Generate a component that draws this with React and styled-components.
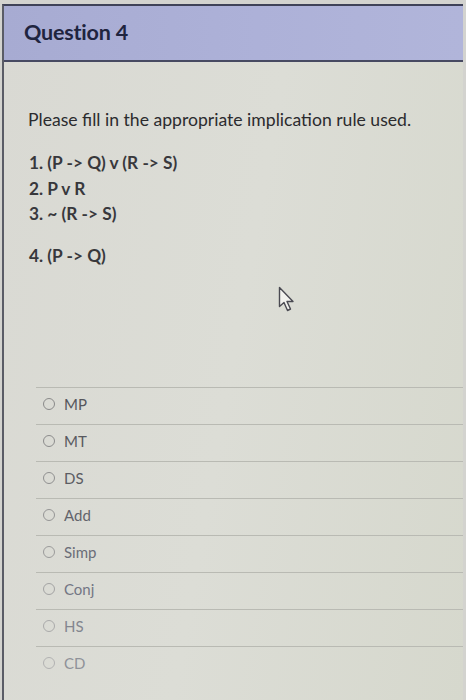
import React from 'react';
import styled, { createGlobalStyle } from 'styled-components';

const GlobalStyle = createGlobalStyle`
  html, body {
    margin: 0;
    padding: 0;
    background: #d3d3cf;
    font-family: Lato, "Open Sans", sans-serif;
  }
`;

const Page = styled.div`
  width: 466px;
  height: 700px;
  overflow: hidden;
  padding-top: 4px;
  box-sizing: border-box;
  background: #d3d3cf;
`;

const Panel = styled.section`
  margin: 0 3px 0 2px;
  height: 100%;
  border-left: 2px solid #5a5c66;
  border-top: 2px solid #3f4258;
  background: linear-gradient(100deg, #d9d9d3 0%, #dcddd6 50%, #d6d8cd 100%);
`;

const Header = styled.header`
  height: 54px;
  display: flex;
  align-items: center;
  padding-left: 20px;
  background: linear-gradient(90deg, #a7abd2 0%, #adb1d8 55%, #b1b5da 100%);
  border-bottom: 2px solid #474a62;
`;

const Title = styled.h2`
  margin: 0 0 2px;
  font-size: 21.5px;
  font-weight: 700;
  color: #20243f;
  letter-spacing: -0.2px;
`;

const Body = styled.div`
  padding: 47px 0 0 24px;
  position: relative;
`;

const Prompt = styled.p`
  margin: 0 0 20px;
  font-size: 17.6px;
  color: #2b2b2e;
`;

const Steps = styled.ol`
  list-style: none;
  margin: 0;
  padding: 0 0 0 1px;
`;

const Step = styled.li`
  font-size: 17.3px;
  font-weight: 700;
  color: #38383c;
  line-height: 25.5px;
  margin-top: ${p => (p.$gap ? '16px' : '0')};
`;

const Cursor = styled.svg`
  position: absolute;
  left: 274px;
  top: 224px;
`;

const Options = styled.ul`
  list-style: none;
  margin: 119px 0 0 8px;
  padding: 0;
`;

const Option = styled.li`
  display: flex;
  align-items: center;
  gap: 9px;
  height: 37px;
  padding: 0 0 4px 7px;
  box-sizing: border-box;
  border-top: 1px solid #b9bab3;
  font-size: 15px;
  color: ${p => p.$tone};
`;

const Radio = styled.span`
  width: 10px;
  height: 10px;
  border-radius: 50%;
  border: 1.5px solid ${p => p.$tone};
  flex: none;
`;

const steps = [
  '1. (P -> Q) v (R -> S)',
  '2. P v R',
  '3. ~ (R -> S)',
  '4. (P -> Q)',
];

const options = ['MP', 'MT', 'DS', 'Add', 'Simp', 'Conj', 'HS', 'CD'];

const tones = ['#55565c', '#58595f', '#5c5d63', '#63646b', '#6a6d78', '#737684', '#83868f', '#8f9299'];
const ringTones = ['#8a8a8a', '#8c8c8c', '#909090', '#959595', '#9b9b9b', '#a3a3a3', '#aaaaaa', '#b2b2b2'];

export default function App() {
  return (
    <Page>
      <GlobalStyle />
      <Panel>
        <Header>
          <Title>Question 4</Title>
        </Header>
        <Body>
          <Prompt>Please fill in the appropriate implication rule used.</Prompt>
          <Steps>
            {steps.map((s, i) => (
              <Step key={s} $gap={i === 3}>{s}</Step>
            ))}
          </Steps>
          <Cursor width="18" height="28" viewBox="0 0 18 28">
            <path
              d="M1.5 1.5 L1.5 20.5 L6 16.5 L9.5 24.5 L12.5 23 L9 15.5 L15 15.5 Z"
              fill="#f2f2ee"
              stroke="#4a4a52"
              strokeWidth="1.4"
              strokeLinejoin="round"
            />
          </Cursor>
          <Options>
            {options.map((o, i) => (
              <Option key={o} $tone={tones[i]}>
                <Radio $tone={ringTones[i]} />
                {o}
              </Option>
            ))}
          </Options>
        </Body>
      </Panel>
    </Page>
  );
}
